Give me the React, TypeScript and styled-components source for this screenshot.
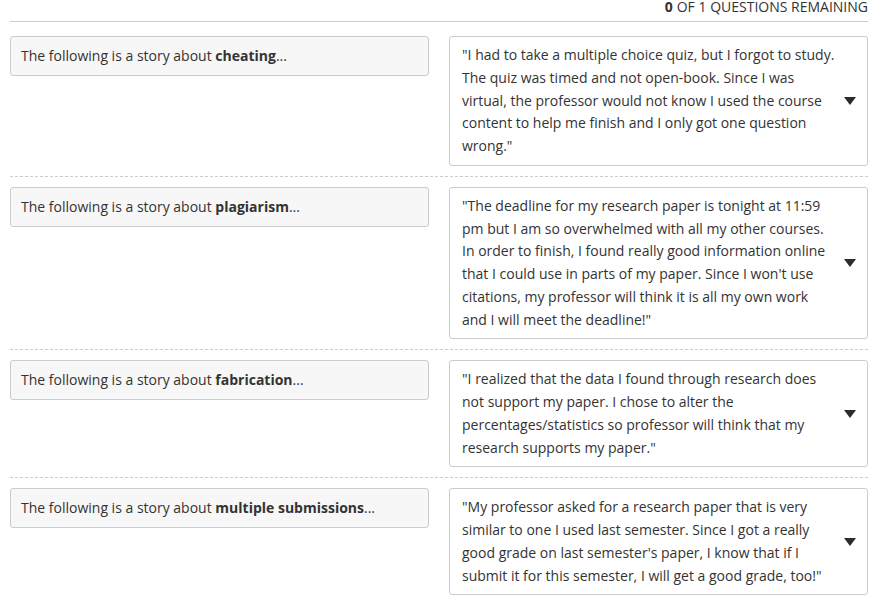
import React from "react";
import styled, { createGlobalStyle } from "styled-components";

const Global = createGlobalStyle`
  html, body { margin: 0; padding: 0; background: #ffffff; }
  body { font-family: "Open Sans", "Noto Sans", Arial, sans-serif; color: #333333; }
  * { box-sizing: border-box; }
`;

const Page = styled.div`
  width: 858px;
  margin-left: 10px;
  overflow: hidden;
`;

const Header = styled.div`
  display: flex;
  justify-content: flex-end;
  font-size: 14px;
  line-height: 14px;
  padding-bottom: 7px;
  text-transform: uppercase;
  color: #333333;
  border-bottom: 1px solid #cccccc;
`;

const Count = styled.b`
  font-weight: 700;
  margin-right: 4px;
`;

const List = styled.div`
  display: flex;
  flex-direction: column;
  padding-top: 14px;
`;

const Row = styled.div<{ $last?: boolean }>`
  display: grid;
  grid-template-columns: 1fr 1fr;
  column-gap: 20px;
  align-items: start;
  padding-bottom: ${(p) => (p.$last ? "0" : "10px")};
  margin-bottom: ${(p) => (p.$last ? "0" : "10px")};
  border-bottom: ${(p) => (p.$last ? "none" : "1px dashed #cccccc")};
`;

const Prompt = styled.div`
  background: #f7f7f7;
  border: 1px solid #cccccc;
  border-radius: 3px;
  padding: 8px 10px 8px 10px;
  font-size: 14px;
  line-height: 22px;
  color: #333333;
`;

const Answer = styled.div`
  display: flex;
  align-items: center;
  background: #ffffff;
  border: 1px solid #cccccc;
  border-radius: 3px;
  padding: 7px 12px 7px 12px;
`;

const AnswerText = styled.div`
  flex: 1;
  font-size: 14px;
  line-height: 22.75px;
  color: #333333;
  padding-right: 8px;
`;

const Caret = styled.svg`
  width: 12px;
  height: 8px;
  flex: none;
  margin-right: -1px;
`;

const items = [
  {
    topic: "cheating",
    story:
      "\"I had to take a multiple choice quiz, but I forgot to study. The quiz was timed and not open-book. Since I was virtual, the professor would not know I used the course content to help me finish and I only got one question wrong.\"",
  },
  {
    topic: "plagiarism",
    story:
      "\"The deadline for my research paper is tonight at 11:59 pm but I am so overwhelmed with all my other courses. In order to finish, I found really good information online that I could use in parts of my paper. Since I won't use citations, my professor will think it is all my own work and I will meet the deadline!\"",
  },
  {
    topic: "fabrication",
    story:
      "\"I realized that the data I found through research does not support my paper. I chose to alter the percentages/statistics so professor will think that my research supports my paper.\"",
  },
  {
    topic: "multiple submissions",
    story:
      "\"My professor asked for a research paper that is very similar to one I used last semester. Since I got a really good grade on last semester's paper, I know that if I submit it for this semester, I will get a good grade, too!\"",
  },
];

export default function App() {
  return (
    <>
      <Global />
      <Page>
        <Header>
          <Count>0</Count>
          <span>of 1 questions remaining</span>
        </Header>
        <List>
          {items.map((it, i) => (
            <Row key={it.topic} $last={i === items.length - 1}>
              <Prompt>
                The following is a story about <b>{it.topic}</b>...
              </Prompt>
              <Answer>
                <AnswerText>{it.story}</AnswerText>
                <Caret viewBox="0 0 12 8">
                  <path d="M0 0 H12 L6 8 Z" fill="#2b2b2b" />
                </Caret>
              </Answer>
            </Row>
          ))}
        </List>
      </Page>
    </>
  );
}
